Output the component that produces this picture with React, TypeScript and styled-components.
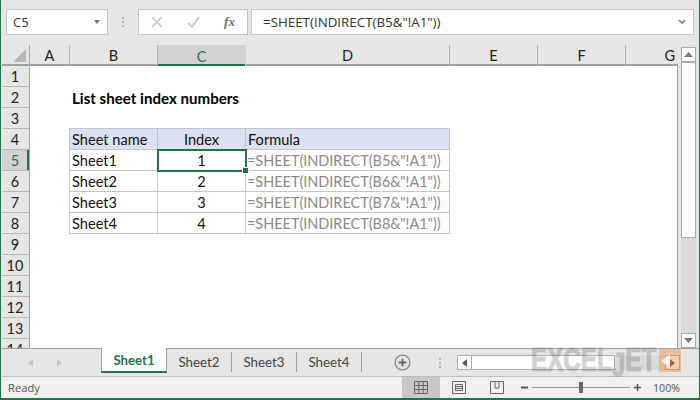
import React from "react";
import styled, { createGlobalStyle } from "styled-components";

const GREEN = "#217346";
const UI = `"Open Sans", "Liberation Sans", sans-serif`;
const CELL = `Lato, "Liberation Sans", sans-serif`;

const Global = createGlobalStyle`
  html, body { margin: 0; padding: 0; background: #e6e6e6; }
  * { box-sizing: border-box; }
`;

const Window = styled.div`
  width: 700px; height: 400px; overflow: hidden; position: relative;
  display: flex; flex-direction: column;
  background: #e6e6e6;
  border-left: 1px solid ${GREEN};
  padding-left: 1px;
  border-bottom: 2px solid ${GREEN};
  border-right: 1px solid ${GREEN};
  font-family: ${CELL};
`;

const FormulaBar = styled.div`
  height: 45px; flex: none; display: flex; align-items: flex-start;
  padding: 9px 5px 0 4px;
`;
const NameBox = styled.div`
  width: 102px; height: 26px; background: #fff; border: 1px solid #c6c6c6;
  display: flex; align-items: center; justify-content: space-between;
  padding: 0 7px 0 6px; font: 13px ${UI}; color: #333;
`;
const Caret = styled.span`
  width: 0; height: 0; border-left: 3.5px solid transparent; border-right: 3.5px solid transparent;
  border-top: 4px solid #777;
`;
const Grip = styled.div`
  width: 30px; height: 26px; display: flex; flex-direction: column; align-items: center;
  justify-content: center; gap: 2px;
  span { width: 2px; height: 2px; background: #b4b4b4; }
`;
const FxGroup = styled.div`
  width: 110px; height: 26px; background: #fff; border: 1px solid #c6c6c6; margin-right: 3px;
  display: grid; grid-template-columns: 35px 38px 35px; align-items: center; justify-items: center;
`;
const FxLabel = styled.span`
  font: italic 700 13px "Liberation Serif", serif; color: #707070;
`;
const FormulaInput = styled.div`
  flex: 1; height: 26px; background: #fff; border: 1px solid #c6c6c6;
  display: flex; align-items: center; justify-content: space-between;
  padding: 0 7px 0 11px; font: 13.35px ${UI}; color: #333;
`;

const Main = styled.div`
  height: 303px; flex: none; display: flex;
`;
const SheetPane = styled.div`
  width: 676px; flex: none; display: flex; flex-direction: column;
`;
const HeaderRow = styled.div`
  height: 21px; flex: none; display: flex; border-bottom: 2px solid #9f9f9f;
`;
const Corner = styled.div`
  width: 28px; height: 20px; flex: none; border-right: 1px solid #a8a8a8; display: flex;
  align-items: flex-end; justify-content: flex-end; padding: 0 3px 3px 0;
`;
const ColHead = styled.div<{ $w: number; $active?: boolean }>`
  width: ${p => p.$w}px; flex: none; display: flex; align-items: center; justify-content: center;
  font: 14.5px ${CELL}; padding-top: 1px;
  color: ${p => (p.$active ? GREEN : "#222")};
  background: ${p => (p.$active ? "#d2d2d2" : "transparent")};
  border-right: 1px solid ${p => (p.$active ? "#d2d2d2" : "#b0b0b0")};
  height: ${p => (p.$active ? "21px" : "20px")};
  box-shadow: ${p => (p.$active ? `inset 0 -2px 0 ${GREEN}` : "none")};
`;
const GHead = styled(ColHead)`
  justify-content: flex-end; border-right: 0; padding-right: 3px;
`;

const Body = styled.div`
  flex: 1; min-height: 0; display: flex; overflow: hidden;
`;
const RowHeads = styled.div`
  width: 28px; flex: none; border-right: 1px solid #a8a8a8; overflow: hidden;
`;
const RowHead = styled.div<{ $active?: boolean }>`
  height: 21px; display: flex; align-items: center; justify-content: center;
  font: 14.5px ${CELL}; padding-right: 1px;
  border-bottom: 1px solid #b8b8b8;
  color: ${p => (p.$active ? GREEN : "#222")};
  background: ${p => (p.$active ? "#d2d2d2" : "transparent")};
  box-shadow: ${p => (p.$active ? `inset -2px 0 0 ${GREEN}` : "none")};
`;
const Canvas = styled.div`
  flex: 1; background: #fff; border-right: 1px solid #9f9f9f; padding-left: 39px;
  display: flex; flex-direction: column;
`;
const Title = styled.div`
  height: 21px; margin-top: 21px; margin-bottom: 20px; padding-left: 3px;
  display: flex; align-items: center; font: 700 15.1px ${CELL}; color: #000;
`;
const Table = styled.div`
  display: grid; grid-template-columns: 88px 88px 204px; grid-auto-rows: 21px; width: 381px;
  border-top: 1px solid #c6c6c6; border-left: 1px solid #c6c6c6;
`;
const Cell = styled.div<{ $head?: boolean; $center?: boolean; $muted?: boolean; $selected?: boolean }>`
  position: relative; display: flex; align-items: center;
  z-index: ${p => (p.$selected ? 2 : "auto")};
  justify-content: ${p => (p.$center ? "center" : "flex-start")};
  padding-left: ${p => (p.$center ? 0 : "2px")};
  border-right: 1px solid #c6c6c6; border-bottom: 1px solid #c6c6c6;
  font: 14.6px ${CELL}; white-space: nowrap;
  color: ${p => (p.$muted ? "#8a8a8a" : "#111")};
  background: ${p => (p.$head ? "#d9e1f2" : "#fff")};
`;
const FormulaCell = styled(Cell)`
  font-size: 14.45px; padding-left: 1px;
`;
const Selection = styled.span`
  position: absolute; left: -1px; top: -1px; right: -2px; bottom: -2px; border: 2px solid ${GREEN};
  pointer-events: none;
`;
const FillHandle = styled.span`
  position: absolute; right: -3px; bottom: -3px; width: 5px; height: 5px; background: ${GREEN};
  box-shadow: 0 0 0 1px #fff;
`;

const VScroll = styled.div`
  width: 15px; flex: none; margin: 2px 0 0 3px; display: flex; flex-direction: column;
`;
const ScrollBtn = styled.div`
  height: 15px; width: 15px; background: #fff; border: 1px solid #ababab;
  display: flex; align-items: center; justify-content: center; flex: none;
`;
const VThumb = styled.div`
  width: 15px; height: 176px; flex: none; background: #fff; border: 1px solid #ababab;
`;
const VTrack = styled.div`
  width: 15px; flex: 1; background: #dadada;
`;

const Tabs = styled.div`
  height: 29px; flex: none; display: flex; align-items: flex-start;
  border-top: 1px solid #9f9f9f; border-bottom: 1px solid #bcbcbc;
`;
const TabNav = styled.div`
  width: 99px; height: 27px; display: flex; align-items: center; padding-left: 26px; gap: 24px; flex: none;
`;
const ActiveTab = styled.div`
  width: 66px; height: 25px; flex: none; background: #fff; margin-top: -1px; display: flex; align-items: center; justify-content: center;
  border-left: 1px solid #9f9f9f; border-right: 1px solid #9f9f9f; border-bottom: 2px solid ${GREEN};
  font: 700 13.2px ${CELL}; color: ${GREEN};
`;
const Tab = styled.div`
  width: 65px; height: 20px; flex: none; margin-top: 3px; display: flex; align-items: center; justify-content: center;
  font: 13.3px ${CELL}; color: #444; border-right: 1px solid #9f9f9f;
`;
const AddWrap = styled.div`
  width: 49px; display: flex; align-items: center; height: 27px; padding-left: 32px; flex: none;
`;
const AddIcon = styled.svg`
  flex: none;
`;
const TabGrip = styled(Grip)`
  width: 12px; height: 27px; margin-left: 23px; flex: none;
`;
const HScroll = styled.div`
  width: 223px; height: 15px; margin: 6px 0 0 11px; display: flex; flex: none; background: #dadada;
`;
const HBtn = styled.div`
  width: 15px; height: 15px; background: #fff; border: 1px solid #ababab; display: flex; align-items: center; justify-content: center; flex: none;
`;
const HThumb = styled.div`
  width: 143px; height: 15px; background: #fff; border: 1px solid #ababab; border-left: 0; flex: none;
`;
const HTrack = styled.div`flex: 1;`;

const Status = styled.div`
  flex: 1; min-height: 0; background: #f0f0f0; display: flex; align-items: center;
`;
const Ready = styled.span`
  width: 50px; flex: none; padding-left: 6px; font: 11.2px ${UI}; color: #555;
`;
const StatusSpacer = styled.div`flex: 1;`;
const ViewBtn = styled.div<{ $active?: boolean }>`
  width: 38px; height: 21px; display: flex; align-items: center; justify-content: center; flex: none;
  background: ${p => (p.$active ? "#c8c8c8" : "transparent")};
`;
const Zoomer = styled.div`
  width: 120px; margin-left: 5px; display: flex; align-items: center; flex: none; height: 21px;
`;
const ZoomTrack = styled.div`
  flex: 1; height: 1px; background: #9a9a9a; margin: 0 4px; display: flex; justify-content: center; align-items: center;
`;
const ZoomThumb = styled.span`
  width: 4px; height: 11px; background: #666; flex: none;
`;
const ZoomPct = styled.span`
  width: 58px; flex: none; text-align: right; padding-right: 19px; font: 10.6px ${UI}; color: #555;
`;

const Watermark = styled.div`
  position: absolute; left: 530px; top: 348px; height: 24px; display: flex; align-items: flex-start;
  pointer-events: none; z-index: 5;
`;
const WmText = styled.span`
  display: block; width: 125px; transform: scaleX(0.735); transform-origin: left top; white-space: nowrap;
  font: 700 33px/24px "Liberation Sans", sans-serif; color: #6e6e6e; opacity: 0.3;
  -webkit-text-stroke: 1.2px #6e6e6e;
`;
const WmJ = styled.span`
  display: inline-block; transform: translateY(5px);
`;
const WmBox = styled.span`
  width: 22px; height: 23px; background: rgba(236,130,50,0.38); display: flex; align-items: center; justify-content: flex-start;
  margin-left: 3px; margin-top: 1px; flex: none;
`;

const cols: [string, number][] = [["A", 40], ["B", 88], ["C", 88], ["D", 204], ["E", 88], ["F", 88]];
const rows = Array.from({ length: 14 }, (_, i) => i + 1);
const sheetData = [
  { n: "Sheet1", b: "B5" },
  { n: "Sheet2", b: "B6" },
  { n: "Sheet3", b: "B7" },
  { n: "Sheet4", b: "B8" },
];

export default function App() {
  return (
    <Window>
      <Global />
      <FormulaBar>
        <NameBox>C5<Caret /></NameBox>
        <Grip><span /><span /><span /></Grip>
        <FxGroup>
          <svg width="12" height="12" viewBox="0 0 12 12"><path d="M1 1l10 10M11 1L1 11" stroke="#d0d0d0" strokeWidth="2" fill="none" /></svg>
          <svg width="13" height="12" viewBox="0 0 13 12"><path d="M1 7l4 4 7-10" stroke="#d0d0d0" strokeWidth="2.2" fill="none" /></svg>
          <FxLabel>fx</FxLabel>
        </FxGroup>
        <FormulaInput>
          =SHEET(INDIRECT(B5&amp;"!A1"))
          <svg width="8" height="6" viewBox="0 0 8 6"><path d="M1 1l3 3 3-3" stroke="#777" strokeWidth="1.6" fill="none" /></svg>
        </FormulaInput>
      </FormulaBar>
      <Main>
        <SheetPane>
          <HeaderRow>
            <Corner>
              <svg width="13" height="13" viewBox="0 0 13 13"><path d="M13 0v13H0z" fill="#b9b9b9" /></svg>
            </Corner>
            {cols.map(([c, w]) => (
              <ColHead key={c} $w={w} $active={c === "C"}>{c}</ColHead>
            ))}
            <GHead $w={52}>G</GHead>
          </HeaderRow>
          <Body>
            <RowHeads>
              {rows.map(r => (
                <RowHead key={r} $active={r === 5}>{r}</RowHead>
              ))}
            </RowHeads>
            <Canvas>
              <Title>List sheet index numbers</Title>
              <Table>
                <Cell $head>Sheet name</Cell>
                <Cell $head $center>Index</Cell>
                <Cell $head>Formula</Cell>
                {sheetData.map((s, i) => (
                  <React.Fragment key={s.n}>
                    <Cell>{s.n}</Cell>
                    <Cell $center $selected={i === 0}>
                      {i + 1}
                      {i === 0 && <Selection><FillHandle /></Selection>}
                    </Cell>
                    <FormulaCell $muted>=SHEET(INDIRECT({s.b}&amp;"!A1"))</FormulaCell>
                  </React.Fragment>
                ))}
              </Table>
            </Canvas>
          </Body>
        </SheetPane>
        <VScroll>
          <ScrollBtn>
            <svg width="9" height="5" viewBox="0 0 9 5"><path d="M4.5 0L9 5H0z" fill="#777" /></svg>
          </ScrollBtn>
          <VThumb />
          <VTrack />
          <ScrollBtn>
            <svg width="9" height="5" viewBox="0 0 9 5"><path d="M4.5 5L9 0H0z" fill="#777" /></svg>
          </ScrollBtn>
        </VScroll>
      </Main>
      <Tabs>
        <TabNav>
          <svg width="5" height="8" viewBox="0 0 5 8"><path d="M5 0v8L0 4z" fill="#c6c6c6" /></svg>
          <svg width="5" height="8" viewBox="0 0 5 8"><path d="M0 0v8l5-4z" fill="#c6c6c6" /></svg>
        </TabNav>
        <ActiveTab>Sheet1</ActiveTab>
        <Tab>Sheet2</Tab>
        <Tab>Sheet3</Tab>
        <Tab>Sheet4</Tab>
        <AddWrap>
          <AddIcon width="17" height="17" viewBox="0 0 17 17">
            <circle cx="8.5" cy="8.5" r="7.4" fill="none" stroke="#8a8a8a" strokeWidth="1.3" />
            <path d="M8.5 4.5v8M4.5 8.5h8" stroke="#666" strokeWidth="1.8" />
          </AddIcon>
        </AddWrap>
        <TabGrip><span /><span /><span /></TabGrip>
        <HScroll>
          <HBtn><svg width="5" height="8" viewBox="0 0 5 8"><path d="M5 0v8L0 4z" fill="#555" /></svg></HBtn>
          <HThumb />
          <HTrack />
          <HBtn><svg width="5" height="8" viewBox="0 0 5 8"><path d="M0 0v8l5-4z" fill="#555" /></svg></HBtn>
        </HScroll>
      </Tabs>
      <Status>
        <Ready>Ready</Ready>
        <StatusSpacer />
        <ViewBtn $active>
          <svg width="14" height="13" viewBox="0 0 14 13"><path d="M.5.5h13v12H.5zM.5 4.5h13M.5 8.5h13M4.8.5v12M9.2.5v12" fill="none" stroke="#666" /></svg>
        </ViewBtn>
        <ViewBtn>
          <svg width="14" height="13" viewBox="0 0 14 13"><path d="M.5.5h13v12H.5z M3.5 3.5h7v6h-7z M4 5.5h6M4 7.5h6" fill="none" stroke="#666" /></svg>
        </ViewBtn>
        <ViewBtn>
          <svg width="14" height="13" viewBox="0 0 14 13"><path d="M.5 12.5V.5h13v12zM5 .5v6.5h4V.5" fill="none" stroke="#666" /></svg>
        </ViewBtn>
        <Zoomer>
          <svg width="7" height="7" viewBox="0 0 7 7"><path d="M0 3.5h7" stroke="#555" strokeWidth="2" /></svg>
          <ZoomTrack><ZoomThumb /></ZoomTrack>
          <svg width="7" height="7" viewBox="0 0 7 7"><path d="M0 3.5h7M3.5 0v7" stroke="#555" strokeWidth="1.6" /></svg>
        </Zoomer>
        <ZoomPct>100%</ZoomPct>
      </Status>
      <Watermark>
        <WmText>EXCEL<WmJ>J</WmJ>ET</WmText>
        <WmBox>
          <svg width="11" height="16" viewBox="0 0 11 16"><path d="M11 1L2 8l9 7z" fill="#fff" opacity=".75" /></svg>
        </WmBox>
      </Watermark>
    </Window>
  );
}
